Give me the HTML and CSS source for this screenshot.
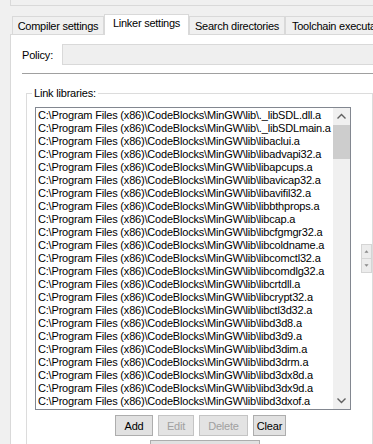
FILE: index.html
```html
<!DOCTYPE html>
<html>
<head>
<meta charset="utf-8">
<link rel="stylesheet" href="styles.css">
</head>
<body>
<div class="dialog">
  <div class="topbox"></div>
  <div class="tabs">
    <div class="tab t1">Compiler settings</div>
    <div class="tab active t2">Linker settings</div>
    <div class="tab t3">Search directories</div>
    <div class="tab t4">Toolchain executables</div>
  </div>
  <div class="panel">
    <div class="policy">
      <span class="lbl">Policy:</span>
      <div class="combo"></div>
    </div>
    <div class="sep"></div>
    <fieldset class="group">
      <legend>Link libraries:</legend>
      <div class="listrow">
        <div class="listbox">
          <div class="items">
            <div class="item">C:\Program Files (x86)\CodeBlocks\MinGW\lib\._libSDL.dll.a</div>
            <div class="item">C:\Program Files (x86)\CodeBlocks\MinGW\lib\._libSDLmain.a</div>
            <div class="item">C:\Program Files (x86)\CodeBlocks\MinGW\lib\libaclui.a</div>
            <div class="item">C:\Program Files (x86)\CodeBlocks\MinGW\lib\libadvapi32.a</div>
            <div class="item">C:\Program Files (x86)\CodeBlocks\MinGW\lib\libapcups.a</div>
            <div class="item">C:\Program Files (x86)\CodeBlocks\MinGW\lib\libavicap32.a</div>
            <div class="item">C:\Program Files (x86)\CodeBlocks\MinGW\lib\libavifil32.a</div>
            <div class="item">C:\Program Files (x86)\CodeBlocks\MinGW\lib\libbthprops.a</div>
            <div class="item">C:\Program Files (x86)\CodeBlocks\MinGW\lib\libcap.a</div>
            <div class="item">C:\Program Files (x86)\CodeBlocks\MinGW\lib\libcfgmgr32.a</div>
            <div class="item">C:\Program Files (x86)\CodeBlocks\MinGW\lib\libcoldname.a</div>
            <div class="item">C:\Program Files (x86)\CodeBlocks\MinGW\lib\libcomctl32.a</div>
            <div class="item">C:\Program Files (x86)\CodeBlocks\MinGW\lib\libcomdlg32.a</div>
            <div class="item">C:\Program Files (x86)\CodeBlocks\MinGW\lib\libcrtdll.a</div>
            <div class="item">C:\Program Files (x86)\CodeBlocks\MinGW\lib\libcrypt32.a</div>
            <div class="item">C:\Program Files (x86)\CodeBlocks\MinGW\lib\libctl3d32.a</div>
            <div class="item">C:\Program Files (x86)\CodeBlocks\MinGW\lib\libd3d8.a</div>
            <div class="item">C:\Program Files (x86)\CodeBlocks\MinGW\lib\libd3d9.a</div>
            <div class="item">C:\Program Files (x86)\CodeBlocks\MinGW\lib\libd3dim.a</div>
            <div class="item">C:\Program Files (x86)\CodeBlocks\MinGW\lib\libd3drm.a</div>
            <div class="item">C:\Program Files (x86)\CodeBlocks\MinGW\lib\libd3dx8d.a</div>
            <div class="item">C:\Program Files (x86)\CodeBlocks\MinGW\lib\libd3dx9d.a</div>
            <div class="item">C:\Program Files (x86)\CodeBlocks\MinGW\lib\libd3dxof.a</div>
          </div>
          <div class="vscroll">
            <div class="arrow">
              <svg width="17" height="17" viewBox="0 0 17 17"><polyline points="4.5,10.5 8.5,6.5 12.5,10.5" fill="none" stroke="#606060" stroke-width="1.4"/></svg>
            </div>
            <div class="track">
              <div class="thumb"></div>
            </div>
            <div class="arrow">
              <svg width="17" height="17" viewBox="0 0 17 17"><polyline points="4.5,6.5 8.5,10.5 12.5,6.5" fill="none" stroke="#606060" stroke-width="1.4"/></svg>
            </div>
          </div>
        </div>
        <div class="spin">
          <div class="spinbtn">
            <svg width="11" height="13" viewBox="0 0 11 13"><polygon points="3,8 8,8 5.5,5" fill="#8a8a8a"/></svg>
          </div>
          <div class="spinbtn">
            <svg width="11" height="13" viewBox="0 0 11 13"><polygon points="3,5 8,5 5.5,8" fill="#8a8a8a"/></svg>
          </div>
        </div>
      </div>
      <div class="buttons">
        <button class="btn b-add">Add</button>
        <button class="btn b-edit" disabled>Edit</button>
        <button class="btn b-del" disabled>Delete</button>
        <button class="btn b-clear">Clear</button>
      </div>
      <div class="buttons2">
        <button class="btn b-wide"></button>
      </div>
    </fieldset>
  </div>
</div>
</body>
</html>
```

FILE: styles.css
```css
html, body {
  margin: 0;
  padding: 0;
}
body {
  background: #f0f0f0;
  width: 373px;
  height: 444px;
  overflow: hidden;
  font-family: "Liberation Sans", Arial, sans-serif;
  font-size: 11px;
  color: #000;
}
.dialog {
  width: 460px;
}
.topbox {
  margin-left: 10px;
  height: 5px;
  border-left: 1px solid #d9d9d9;
  border-bottom: 1px solid #d9d9d9;
  background: #f0f0f0;
}
.tabs {
  display: flex;
  align-items: flex-end;
  margin-top: 8px;
  margin-left: 12px;
  height: 20px;
}
.tab {
  box-sizing: border-box;
  height: 18px;
  border: 1px solid #d9d9d9;
  border-bottom: none;
  background: #f0f0f0;
  display: flex;
  align-items: center;
  justify-content: center;
  line-height: 1;
  padding-top: 1px;
  white-space: nowrap;
  letter-spacing: -0.25px;
}
.t1 { width: 92px; }
.t2 { width: 85px; }
.t3 { width: 96px; }
.t4 { width: 140px; justify-content: flex-start; padding-left: 6px; }
.tab.active {
  height: 21px;
  background: #fff;
  margin-bottom: -1px;
  position: relative;
  z-index: 1;
  padding-top: 0;
  padding-bottom: 3px;
}
.panel {
  margin-left: 10px;
  border-left: 1px solid #d9d9d9;
  border-top: 1px solid #d9d9d9;
  background: #fff;
  height: 420px;
  padding-left: 11px;
}
.policy {
  display: flex;
  align-items: center;
  margin-top: 9px;
  height: 21px;
}
.lbl {
  width: 40px;
  letter-spacing: -0.2px;
}
.combo {
  box-sizing: border-box;
  height: 21px;
  flex: 1;
  border: 1px solid #d9d9d9;
  background: #efefef;
}
.sep {
  margin-top: 8px;
  height: 1px;
  background: #a0a0a0;
}
.group {
  box-sizing: border-box;
  width: 347px;
  margin: 12px 0 0 4px;
  padding: 0;
  border: 1px solid #dcdcdc;
  min-width: 0;
}
.group legend {
  margin-left: 5px;
  padding: 0 2px;
  line-height: 15px;
  letter-spacing: -0.2px;
}
.listrow {
  display: flex;
  align-items: center;
  margin-top: 6px;
  margin-left: 8px;
}
.listbox {
  box-sizing: border-box;
  width: 316px;
  height: 303px;
  border: 1px solid #828790;
  background: #fff;
  display: flex;
  overflow: hidden;
}
.items {
  flex: 1;
  padding-top: 1px;
  padding-left: 2px;
  overflow: hidden;
}
.item {
  height: 13px;
  line-height: 13px;
  white-space: nowrap;
  letter-spacing: -0.19px;
}
.vscroll {
  width: 17px;
  background: #f0f0f0;
  display: flex;
  flex-direction: column;
}
.arrow {
  height: 17px;
  display: flex;
}
.track {
  flex: 1;
}
.thumb {
  height: 34px;
  background: #cdcdcd;
}
.spin {
  margin-left: 10px;
  box-sizing: border-box;
  width: 11px;
  height: 29px;
  border: 1px solid #d5d5d5;
  background: #ececec;
  display: flex;
  flex-direction: column;
}
.spinbtn {
  flex: 1;
  display: flex;
  align-items: center;
  justify-content: center;
  overflow: hidden;
}
.spinbtn + .spinbtn {
  border-top: 1px solid #d5d5d5;
}
.buttons {
  display: flex;
  gap: 5px;
  margin-top: 5px;
  margin-left: 88px;
}
.btn {
  box-sizing: border-box;
  height: 21px;
  padding: 0;
  border: 1px solid #adadad;
  background: #e1e1e1;
  font-family: "Liberation Sans", Arial, sans-serif;
  font-size: 11px;
  color: #000;
  letter-spacing: -0.2px;
}
.btn:disabled {
  border-color: #c4c4c4;
  background: #e3e3e3;
  color: #a0a0a0;
}
.b-add { width: 38px; }
.b-edit { width: 36px; }
.b-del { width: 49px; }
.b-clear { width: 33px; }
.buttons2 {
  margin-top: 4px;
  margin-left: 123px;
}
.b-wide { width: 110px; display: block; }
```
